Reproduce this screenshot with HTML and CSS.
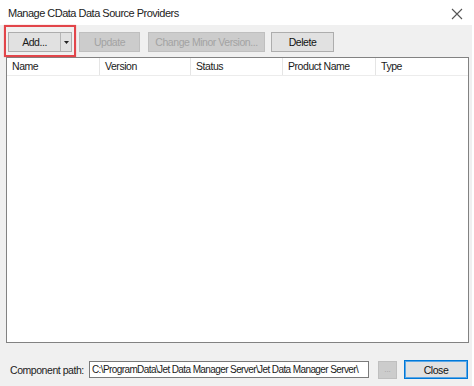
FILE: index.html
```html
<!DOCTYPE html>
<html lang="en">

<head>
  <meta charset="UTF-8">
  <title>Manage CData Data Source Providers</title>
  <link rel="stylesheet" href="styles.css">
</head>

<body>
  <div class="window">
    <div class="titlebar">
      <span class="title">Manage CData Data Source Providers</span>
      <svg class="close-x" width="12" height="12" viewBox="0 0 12 12">
        <path d="M1 1 L11 11 M11 1 L1 11" stroke="#555" stroke-width="1.1" fill="none" />
      </svg>
    </div>

    <div class="toolbar">
      <div class="split-btn">
        <span class="split-main">Add...</span>
        <span class="split-arrow">
          <svg width="5" height="3" viewBox="0 0 5 3"><path d="M0 0 H5 L2.5 3 Z" fill="#222" /></svg>
        </span>
      </div>
      <button class="btn disabled btn-update" disabled>Update</button>
      <button class="btn disabled btn-minor" disabled>Change Minor Version...</button>
      <button class="btn btn-delete">Delete</button>
      <div class="highlight"></div>
    </div>

    <div class="listview">
      <div class="list-head">
        <div class="col col-name">Name</div>
        <div class="col col-version">Version</div>
        <div class="col col-status">Status</div>
        <div class="col col-product">Product Name</div>
        <div class="col col-type">Type</div>
      </div>
    </div>

    <div class="footer">
      <label class="path-label">Component path:</label>
      <div class="path-box">C:\ProgramData\Jet Data Manager Server\Jet Data Manager Server\</div>
      <button class="btn disabled btn-browse" disabled>...</button>
      <button class="btn btn-close">Close</button>
    </div>
  </div>
</body>
</html>
```

FILE: styles.css
```css
html,
body {
  margin: 0;
  background: #fff;
}

body {
  font-family: "Liberation Sans", Arial, sans-serif;
  font-size: 10.5px;
  letter-spacing: -0.45px;
  color: #1a1a1a;
}

.window {
  width: 472px;
  height: 386px;
  background: #f0f0f0;
  display: flex;
  flex-direction: column;
}

.titlebar {
  height: 25px;
  background: #fff;
  display: flex;
  align-items: center;
  justify-content: space-between;
  padding: 0 9px 0 8px;
}

.title {
  font-size: 11px;
  color: #222;
  letter-spacing: -0.5px;
}

.close-x {
  margin-top: 2px;
}

.toolbar {
  position: relative;
  display: flex;
  align-items: center;
  padding: 7px 0 0 8px;
  height: 20px;
}

.btn {
  height: 20px;
  box-sizing: border-box;
  border: 1px solid #adadad;
  background: #e1e1e1;
  font-family: inherit;
  font-size: 10.5px;
  letter-spacing: -0.45px;
  color: #111;
  padding: 0;
}

.btn.disabled {
  background: #cccccc;
  border-color: #bfbfbf;
  color: #a3a3a3;
}

.split-btn {
  width: 64px;
  height: 20px;
  box-sizing: border-box;
  border: 1px solid #adadad;
  background: #e1e1e1;
  display: flex;
}

.split-main {
  width: 51px;
  border-right: 1px solid #b5b5b5;
  display: flex;
  align-items: center;
  justify-content: center;
}

.split-arrow {
  flex: 1;
  display: flex;
  align-items: center;
  justify-content: center;
}

.btn-update {
  width: 61px;
  margin-left: 7px;
}

.btn-minor {
  width: 117px;
  margin-left: 8px;
}

.btn-delete {
  width: 63px;
  margin-left: 6px;
}

.highlight {
  position: absolute;
  left: 4px;
  top: 0;
  width: 72px;
  height: 32px;
  box-sizing: border-box;
  border: 2.5px solid #e2454a;
  box-shadow: 0 0 1px rgba(226, 69, 74, 0.6);
}

.listview {
  margin: 5px 0 0 6px;
  width: 463px;
  height: 286px;
  box-sizing: border-box;
  border: 1px solid #828282;
  background: #fff;
}

.list-head {
  display: flex;
  height: 17px;
  border-bottom: 1px solid #ececec;
}

.col {
  box-sizing: border-box;
  padding-left: 5px;
  line-height: 17px;
  border-right: 1px solid #e5e5e5;
  color: #1a1a1a;
}

.col-name {
  width: 93px;
}

.col-version {
  width: 91px;
}

.col-status {
  width: 92px;
}

.col-product {
  width: 93px;
}

.col-type {
  flex: 1;
  border-right: none;
}

.footer {
  display: flex;
  align-items: center;
  padding: 17px 0 0 10px;
}

.path-label {
  width: 79px;
  color: #222;
  white-space: nowrap;
}

.path-box {
  width: 280px;
  height: 17px;
  box-sizing: border-box;
  border: 1px solid #7a7a7a;
  background: #fff;
  padding-left: 2px;
  font-size: 10px;
  letter-spacing: -0.6px;
  line-height: 15px;
  white-space: nowrap;
  overflow: hidden;
}

.btn-browse {
  width: 19px;
  height: 18px;
  margin-left: 9px;
  font-size: 8px;
  letter-spacing: 0;
}

.btn-close {
  width: 64px;
  height: 19px;
  margin-left: 7px;
  border: 1px solid #0078d7;
  box-shadow: inset 0 0 0 1px #5aa6e6;
}
```
